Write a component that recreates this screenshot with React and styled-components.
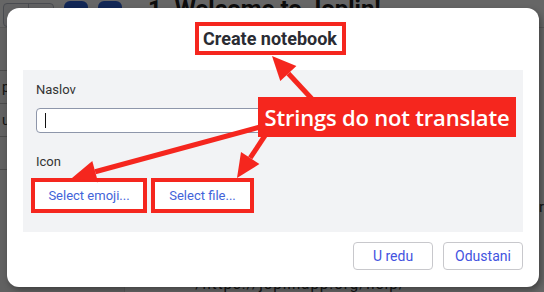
import React from 'react';
import styled, { createGlobalStyle } from 'styled-components';

const Global = createGlobalStyle`
  html, body { margin: 0; padding: 0; }
  body { width: 544px; height: 292px; overflow: hidden; font-family: Roboto, "Liberation Sans", sans-serif; }
`;

const RED = '#f5261e';

const Page = styled.div`
  position: relative;
  width: 544px;
  height: 292px;
  overflow: hidden;
  background: #fff;
`;

/* ---- the app behind the modal ---- */
const Shell = styled.div`
  display: flex;
  flex-direction: column;
  height: 100%;
`;

const Toolbar = styled.div`
  display: flex;
  align-items: flex-start;
  gap: 6px;
  padding: 0 0 0 3px;
  height: 30px;
  border-bottom: 1px solid #ddd;
`;

const ToolGroup = styled.div`
  display: flex;
  margin-top: 3px;
  border: 1px solid #b7bcc8;
  border-radius: 4px;
  background: #f4f5f7;
`;

const ToolBtn = styled.div`
  width: 24px;
  height: 22px;
  border-right: ${p => (p.last ? 'none' : '1px solid #b7bcc8')};
  display: flex;
  align-items: center;
  justify-content: center;
  color: #2f5fd8;
  font-size: 14px;
`;

const RoundBtn = styled.div`
  margin: 1px 0 0 4px;
  width: 24px;
  height: 24px;
  border-radius: 6px;
  background: #2f63d6;
`;

const NoteTitle = styled.div`
  margin-left: 20px;
  margin-top: -5px;
  font-weight: 700;
  font-size: 24px;
  color: #222;
`;

const Body = styled.div`
  flex: 1;
  display: flex;
`;

const Sidebar = styled.div`
  width: 130px;
  background: #f2f2f2;
  border-right: 1px solid #ddd;
  padding-top: 42px;
`;

const SideRow = styled.div`
  height: 33px;
  border-top: 1px solid #bbb;
  font-size: 14px;
  color: #333;
  padding: 8px 0 0 2px;
  box-sizing: border-box;
`;

const Editor = styled.div`
  flex: 1;
  padding: 170px 0 0 400px;
  font-size: 15px;
  color: #333;
  line-height: 19px;
  white-space: nowrap;
`;

const Link = styled.div`
  color: #2b5fcf;
`;

const Source = styled.div`
  margin: 1px 0 0 -330px;
  letter-spacing: 1px;
`;

const Dim = styled.div`
  position: absolute;
  inset: 0;
  background: rgba(0, 0, 0, 0.6);
  padding: 8px 5px 5px 7px;
  box-sizing: border-box;
`;

/* ---- the modal ---- */
const Dialog = styled.div`
  width: 532px;
  height: 279px;
  box-sizing: border-box;
  background: #fff;
  border-radius: 12px;
  box-shadow: 2px 3px 6px rgba(0, 0, 0, 0.35);
  padding: 14px 16px 17px;
  display: flex;
  flex-direction: column;
`;

const TitleRow = styled.div`
  display: flex;
  justify-content: center;
  padding-right: 6px;
`;

const Highlight = styled.div`
  border: 4px solid ${RED};
  display: flex;
  align-items: center;
  justify-content: center;
  box-sizing: border-box;
  width: ${p => p.w}px;
  height: ${p => p.h}px;
  background: #fff;
`;

const Title = styled.h1`
  margin: 0;
  font-size: 18px;
  font-weight: 700;
  color: #2a2c33;
`;

const Form = styled.div`
  margin-top: 15px;
  height: 162px;
  box-sizing: border-box;
  background: #f2f3f5;
  padding: 12px 13px 0;
`;

const Label = styled.div`
  font-size: 13px;
  line-height: 16px;
  color: #333;
  margin-top: ${p => p.top || 0}px;
`;

const Field = styled.div`
  margin-top: 10px;
  height: 25px;
  box-sizing: border-box;
  border: 1px solid #8e96aa;
  border-radius: 4px;
  background: #fff;
  display: flex;
  align-items: center;
  padding-left: 8px;
`;

const Caret = styled.span`
  width: 1px;
  height: 15px;
  background: #111;
`;

const Buttons = styled.div`
  display: flex;
  gap: 4px;
  margin: 8px 0 0 -5px;
`;

const TextButton = styled.span`
  font-size: 13px;
  color: #4264d9;
`;

const Footer = styled.div`
  margin-top: 10px;
  display: flex;
  justify-content: flex-end;
  gap: 10px;
`;

const Button = styled.div`
  width: 80px;
  height: 28px;
  box-sizing: border-box;
  border: 1px solid #c8c8cc;
  border-radius: 4px;
  display: flex;
  align-items: center;
  justify-content: center;
  font-size: 14px;
  color: #4353e0;
`;

/* ---- annotation ---- */
const Callout = styled.div`
  position: absolute;
  left: 258px;
  top: 97px;
  width: 258px;
  height: 40px;
  background: ${RED};
  color: #fff;
  font-family: "Open Sans", sans-serif;
  font-weight: 600;
  font-size: 22px;
  letter-spacing: -0.2px;
  display: flex;
  align-items: center;
  justify-content: center;
`;

const Overlay = styled.svg`
  position: absolute;
  left: 0;
  top: 0;
  pointer-events: none;
`;

function Arrow({ x1, y1, x2, y2 }) {
  const len = 24;
  const half = 11;
  const dx = x2 - x1;
  const dy = y2 - y1;
  const d = Math.hypot(dx, dy);
  const ux = dx / d;
  const uy = dy / d;
  const bx = x2 - ux * len;
  const by = y2 - uy * len;
  const pts = [
    [x2, y2],
    [bx - uy * half, by + ux * half],
    [bx + uy * half, by - ux * half],
  ]
    .map(p => p.join(','))
    .join(' ');
  return (
    <g>
      <line x1={x1} y1={y1} x2={bx} y2={by} stroke={RED} strokeWidth="5" />
      <polygon points={pts} fill={RED} />
    </g>
  );
}

export default function App() {
  return (
    <Page>
      <Global />
      <Shell>
        <Toolbar>
          <ToolGroup>
            <ToolBtn>✎</ToolBtn>
            <ToolBtn last>⁝</ToolBtn>
          </ToolGroup>
          <RoundBtn />
          <RoundBtn />
          <NoteTitle>1. Welcome to Joplin!</NoteTitle>
        </Toolbar>
        <Body>
          <Sidebar>
            <SideRow>pe</SideRow>
            <SideRow>u</SideRow>
            <SideRow />
            <SideRow />
          </Sidebar>
          <Editor>
            <div>– r</div>
            <div>E</div>
            <div>c</div>
            <Link>k</Link>
            <Source>/https://joplinapp.org/help/</Source>
          </Editor>
        </Body>
      </Shell>
      <Dim>
        <Dialog>
          <TitleRow>
            <Highlight w={151} h={33}>
              <Title>Create notebook</Title>
            </Highlight>
          </TitleRow>
          <Form>
            <Label>Naslov</Label>
            <Field>
              <Caret />
            </Field>
            <Label top={21}>Icon</Label>
            <Buttons>
              <Highlight w={116} h={35}>
                <TextButton>Select emoji...</TextButton>
              </Highlight>
              <Highlight w={103} h={35}>
                <TextButton>Select file...</TextButton>
              </Highlight>
            </Buttons>
          </Form>
          <Footer>
            <Button>U redu</Button>
            <Button>Odustani</Button>
          </Footer>
        </Dialog>
      </Dim>
      <Callout>Strings do not translate</Callout>
      <Overlay width="544" height="292">
        <Arrow x1={312} y1={99} x2={272} y2={56} />
        <Arrow x1={264} y1={126} x2={72} y2={178} />
        <Arrow x1={266} y1={134} x2={237} y2={178} />
      </Overlay>
    </Page>
  );
}
